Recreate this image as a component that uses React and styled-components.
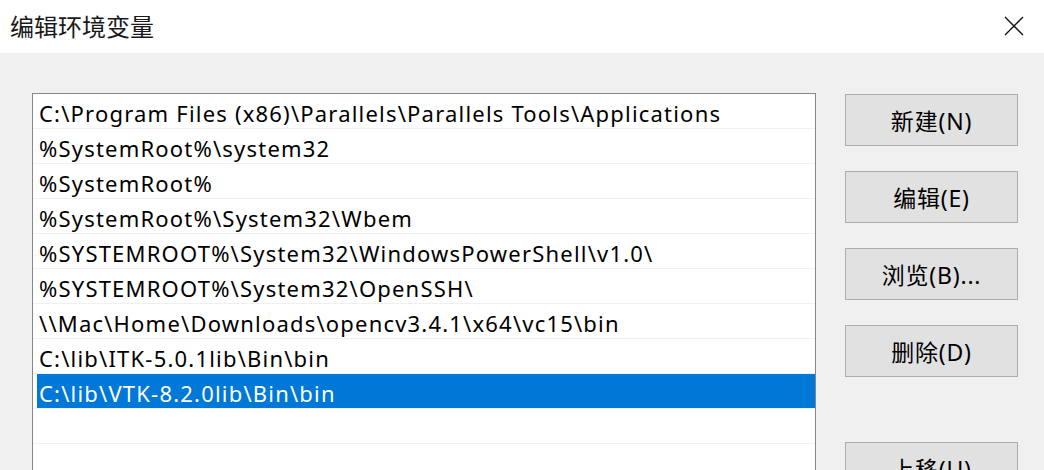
import styled, { createGlobalStyle } from 'styled-components'

const GlobalStyle = createGlobalStyle`
    html, body {
        margin: 0;
        padding: 0;
        background: #f0f0f0;
    }
    * {
        box-sizing: border-box;
    }
`

const Window = styled.div`
    width: 1044px;
    height: 470px;
    overflow: hidden;
    display: flex;
    flex-direction: column;
    font-family: "Noto Sans", "Noto Sans CJK SC", sans-serif;
    color: #000;
`

const TitleBar = styled.div`
    height: 53px;
    flex-shrink: 0;
    background: #fff;
    display: flex;
    align-items: center;
    justify-content: space-between;
    padding: 0 20px 2px 10px;
`

const Title = styled.h1`
    margin: 0;
    font-family: "Noto Sans CJK SC", sans-serif;
    font-size: 24px;
    font-weight: 400;
    color: #1a1a1a;
`

const CloseButton = styled.button`
    width: 20px;
    height: 20px;
    padding: 0;
    border: none;
    background: none;
    display: flex;
    align-items: center;
    justify-content: center;
`

const Body = styled.div`
    flex: 1;
    background: #f0f0f0;
    display: flex;
    align-items: flex-start;
    gap: 29px;
    padding: 40px 0 0 32px;
`

const PathList = styled.ul`
    list-style: none;
    margin: 0;
    padding: 0;
    width: 784px;
    height: 420px;
    flex-shrink: 0;
    background: #fff;
    border: 1px solid #828790;
`

const Row = styled.li`
    height: 35px;
    border-bottom: 1px solid #f0f0f0;
    padding-left: 4px;
`

const RowText = styled.div`
    height: 34px;
    padding: 4px 0 0 2px;
    line-height: 30px;
    font-size: 22px;
    letter-spacing: 1.2px;
    white-space: nowrap;
    background: ${p => (p.$selected ? '#0078d7' : 'transparent')};
    color: ${p => (p.$selected ? '#fff' : '#000')};
`

const ButtonColumn = styled.div`
    display: flex;
    flex-direction: column;
    gap: 25px;
    padding-top: 1px;
`

const ActionButton = styled.button`
    width: 173px;
    height: 52px;
    flex-shrink: 0;
    margin-top: ${p => (p.$spaced ? '40px' : '0')};
    background: #e1e1e1;
    border: 1px solid #adadad;
    font-family: "Noto Sans", "Noto Sans CJK SC", sans-serif;
    font-size: 23px;
    letter-spacing: 0.8px;
    color: #000;
    padding: 0;
`

const paths = [
    'C:\\Program Files (x86)\\Parallels\\Parallels Tools\\Applications',
    '%SystemRoot%\\system32',
    '%SystemRoot%',
    '%SystemRoot%\\System32\\Wbem',
    '%SYSTEMROOT%\\System32\\WindowsPowerShell\\v1.0\\',
    '%SYSTEMROOT%\\System32\\OpenSSH\\',
    '\\\\Mac\\Home\\Downloads\\opencv3.4.1\\x64\\vc15\\bin',
    'C:\\lib\\ITK-5.0.1lib\\Bin\\bin',
    'C:\\lib\\VTK-8.2.0lib\\Bin\\bin',
    '',
    '',
    '',
]

const buttons = [
    { label: '新建(N)' },
    { label: '编辑(E)' },
    { label: '浏览(B)...' },
    { label: '删除(D)' },
    { label: '上移(U)', spaced: true },
]

function App () {
    const selected = 8

    return (
        <>
            <GlobalStyle />
            <Window>
                <TitleBar>
                    <Title>编辑环境变量</Title>
                    <CloseButton aria-label='关闭'>
                        <svg width='20' height='20' viewBox='0 0 20 20'>
                            <path d='M1 1 L19 19 M19 1 L1 19' stroke='#111' strokeWidth='1.4' fill='none' />
                        </svg>
                    </CloseButton>
                </TitleBar>
                <Body>
                    <PathList>
                        {paths.map((path, i) => (
                            <Row key={i}>
                                <RowText $selected={i === selected}>{path}</RowText>
                            </Row>
                        ))}
                    </PathList>
                    <ButtonColumn>
                        {buttons.map(b => (
                            <ActionButton key={b.label} $spaced={b.spaced}>{b.label}</ActionButton>
                        ))}
                    </ButtonColumn>
                </Body>
            </Window>
        </>
    )
}

export default App
